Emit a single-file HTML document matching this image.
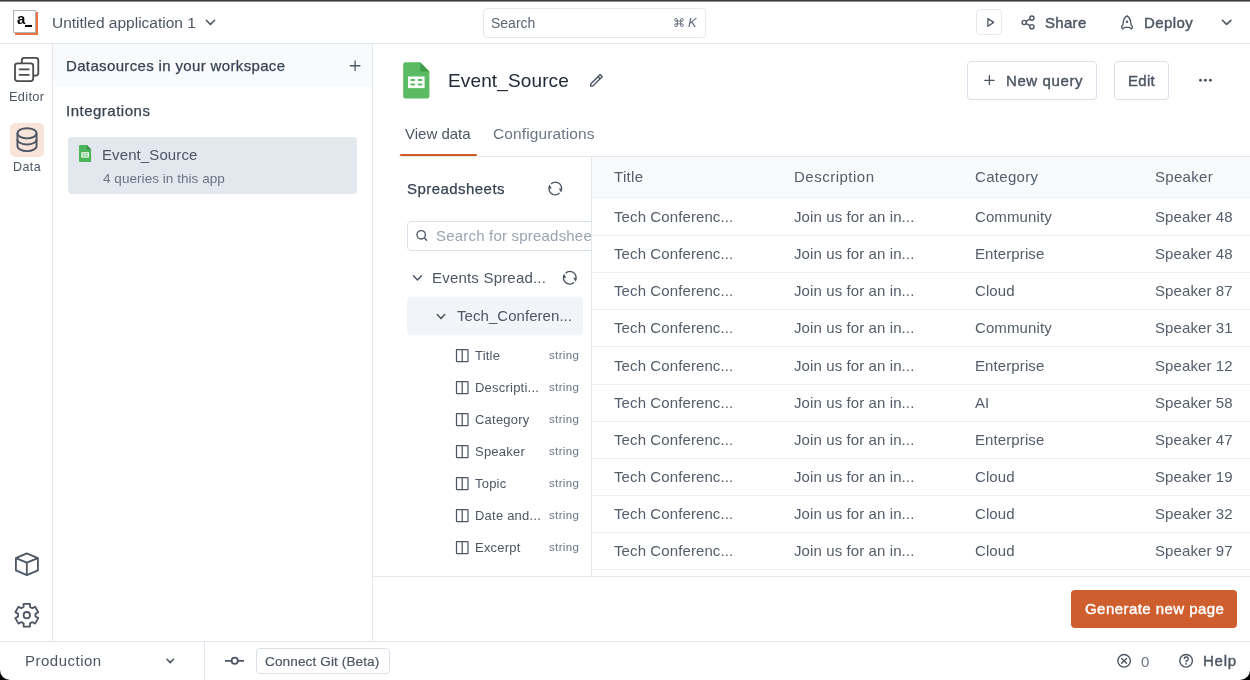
<!DOCTYPE html>
<html><head><meta charset="utf-8">
<style>
*{box-sizing:border-box;margin:0;padding:0}
html,body{width:1250px;height:680px;overflow:hidden;background:#000}
body{font-family:"Liberation Sans",sans-serif;color:#4c5664;position:relative}
#win{position:absolute;left:0;top:0;width:1250px;height:680px;background:#fff;border-radius:0 0 10px 10px;overflow:hidden}
.a{position:absolute;white-space:nowrap;line-height:normal;will-change:transform}
.med{-webkit-text-stroke:0.45px currentColor}
svg{position:absolute;overflow:visible}
</style></head><body>
<div id="win">
<div class="a" style="left:0px;top:0px;width:1250px;height:1px;background:#3c3c3c;"></div>
<div class="a" style="left:0px;top:1px;width:1250px;height:1px;background:#8c8c8c;"></div>
<div class="a" style="left:0px;top:43px;width:1250px;height:1px;background:#e3e8ef;"></div>
<div class="a" style="left:15px;top:12px;width:22.6px;height:22.6px;background:#e7723f;"></div>
<div class="a" style="left:13px;top:10px;width:23px;height:23px;background:#fff;border:1px solid #b4b4b4"></div>
<div class="a" style="left:16.6px;top:10.03px;font-size:15px;color:#000;font-weight:700;">a</div>
<div class="a" style="left:25px;top:25.1px;width:7.4px;height:1.9px;background:#000;"></div>
<div class="a" style="left:52px;top:14.17px;font-size:15.5px;color:#4c5664;">Untitled application 1</div>
<div class="a" style="left:483px;top:8px;width:223px;height:30px;border:1px solid #e3e8ef;border-radius:4px;"></div>
<div class="a" style="left:491px;top:15.33px;font-size:14px;color:#5b6574;">Search</div>
<div class="a" style="left:688px;top:15.43px;font-size:13px;color:#5b6574;font-style:italic">K</div>
<div class="a" style="left:976px;top:9px;width:26px;height:26px;border:1px solid #e3e8ef;border-radius:4px;"></div>
<div class="a" style="left:1045px;top:14.03px;font-size:15px;color:#4c5664;letter-spacing:0.3px;-webkit-text-stroke:0.42px #4c5664;">Share</div>
<div class="a" style="left:1144px;top:14.03px;font-size:15px;color:#4c5664;letter-spacing:0.4px;-webkit-text-stroke:0.42px #4c5664;">Deploy</div>
<div class="a" style="left:52px;top:44px;width:1px;height:597px;background:#e3e8ef;"></div>
<div class="a" style="left:9px;top:89.42px;font-size:12.8px;color:#4c5664;letter-spacing:0.3px;">Editor</div>
<div class="a" style="left:10px;top:123px;width:34px;height:34px;background:#f9e4da;border-radius:5px"></div>
<div class="a" style="left:13px;top:159.59px;font-size:12.5px;color:#4c5664;letter-spacing:0.4px;">Data</div>
<div class="a" style="left:53px;top:44px;width:319px;height:43px;background:#f8fafc;"></div>
<div class="a" style="left:372px;top:44px;width:1px;height:597px;background:#e3e8ef;"></div>
<div class="a" style="left:66px;top:56.72px;font-size:15px;color:#364252;letter-spacing:0.35px;-webkit-text-stroke:0.25px #364252;">Datasources in your workspace</div>
<div class="a" style="left:66px;top:101.72px;font-size:15px;color:#364252;letter-spacing:0.5px;-webkit-text-stroke:0.25px #364252;">Integrations</div>
<div class="a" style="left:68px;top:137px;width:289px;height:57px;background:#e3e7ee;border-radius:4px"></div>
<div class="a" style="left:102px;top:145.93px;font-size:15px;color:#4c5664;letter-spacing:0.1px;">Event_Source</div>
<div class="a" style="left:102.5px;top:171.08px;font-size:13.5px;color:#6a7585;letter-spacing:0.05px;">4 queries in this app</div>
<div class="a" style="left:448px;top:70.41px;font-size:19px;color:#202939;letter-spacing:0.13px;">Event_Source</div>
<div class="a" style="left:967px;top:61px;width:130px;height:39px;border:1px solid #d9dfe7;border-radius:4px;"></div>
<div class="a" style="left:1006px;top:71.62px;font-size:15px;color:#4c5664;letter-spacing:0.6px;-webkit-text-stroke:0.42px #4c5664;">New query</div>
<div class="a" style="left:1114px;top:61px;width:55px;height:39px;border:1px solid #d9dfe7;border-radius:4px;"></div>
<div class="a" style="left:1128px;top:71.92px;font-size:15px;color:#4c5664;letter-spacing:0.3px;-webkit-text-stroke:0.42px #4c5664;">Edit</div>
<div class="a" style="left:405px;top:125.23px;font-size:15px;color:#4c5664;">View data</div>
<div class="a" style="left:493px;top:125.27px;font-size:15.5px;color:#6a7585;letter-spacing:0.12px;">Configurations</div>
<div class="a" style="left:398px;top:156px;width:852px;height:1px;background:#e3e8ef;"></div>
<div class="a" style="left:400px;top:154px;width:77px;height:2px;background:#d05b29;border-radius:1px"></div>
<div class="a" style="left:407px;top:180.43px;font-size:15px;color:#364252;letter-spacing:0.45px;-webkit-text-stroke:0.25px #364252;">Spreadsheets</div>
<div class="a" style="left:407px;top:221px;width:200px;height:30px;border:1px solid #d9dfe7;border-radius:4px;"></div>
<div class="a" style="left:436px;top:227.12px;font-size:15px;color:#99a4b3;letter-spacing:0.2px;">Search for spreadsheets</div>
<div class="a" style="left:432px;top:269.43px;font-size:15px;color:#4c5664;letter-spacing:0.2px;">Events Spread...</div>
<div class="a" style="left:407px;top:297px;width:176px;height:38px;background:#f1f5f9;border-radius:4px"></div>
<div class="a" style="left:456.5px;top:307.03px;font-size:15px;color:#4c5664;letter-spacing:0.05px;">Tech_Conferen...</div>
<div class="a" style="left:474.6px;top:347.84px;font-size:13px;color:#4c5664;letter-spacing:0.22px;">Title</div>
<div class="a" style="left:548.6px;top:348.79px;font-size:11.5px;color:#6a7585;letter-spacing:0.35px;">string</div>
<div class="a" style="left:474.6px;top:379.84px;font-size:13px;color:#4c5664;letter-spacing:0.22px;">Descripti...</div>
<div class="a" style="left:548.6px;top:380.79px;font-size:11.5px;color:#6a7585;letter-spacing:0.35px;">string</div>
<div class="a" style="left:474.6px;top:411.84px;font-size:13px;color:#4c5664;letter-spacing:0.22px;">Category</div>
<div class="a" style="left:548.6px;top:412.79px;font-size:11.5px;color:#6a7585;letter-spacing:0.35px;">string</div>
<div class="a" style="left:474.6px;top:443.84px;font-size:13px;color:#4c5664;letter-spacing:0.22px;">Speaker</div>
<div class="a" style="left:548.6px;top:444.79px;font-size:11.5px;color:#6a7585;letter-spacing:0.35px;">string</div>
<div class="a" style="left:474.6px;top:475.84px;font-size:13px;color:#4c5664;letter-spacing:0.22px;">Topic</div>
<div class="a" style="left:548.6px;top:476.79px;font-size:11.5px;color:#6a7585;letter-spacing:0.35px;">string</div>
<div class="a" style="left:474.6px;top:507.84px;font-size:13px;color:#4c5664;letter-spacing:0.22px;">Date and...</div>
<div class="a" style="left:548.6px;top:508.79px;font-size:11.5px;color:#6a7585;letter-spacing:0.35px;">string</div>
<div class="a" style="left:474.6px;top:539.84px;font-size:13px;color:#4c5664;letter-spacing:0.22px;">Excerpt</div>
<div class="a" style="left:548.6px;top:540.79px;font-size:11.5px;color:#6a7585;letter-spacing:0.35px;">string</div>
<div class="a" style="left:592px;top:157px;width:658px;height:419px;background:#fff;"></div>
<div class="a" style="left:592px;top:157px;width:658px;height:40px;background:#f8fafc;"></div>
<div class="a" style="left:591px;top:157px;width:1px;height:419px;background:#e3e8ef;"></div>
<div class="a" style="left:614px;top:168.03px;font-size:15px;color:#535d6b;letter-spacing:0.3px;">Title</div>
<div class="a" style="left:794px;top:168.03px;font-size:15px;color:#535d6b;letter-spacing:0.5px;">Description</div>
<div class="a" style="left:975px;top:168.03px;font-size:15px;color:#535d6b;letter-spacing:0.3px;">Category</div>
<div class="a" style="left:1155px;top:168.03px;font-size:15px;color:#535d6b;letter-spacing:0.3px;">Speaker</div>
<div class="a" style="left:592px;top:197px;width:658px;height:1px;background:#edf1f5;"></div>
<div class="a" style="left:614px;top:207.83px;font-size:15px;color:#535d6b;letter-spacing:0.1px;">Tech Conferenc...</div>
<div class="a" style="left:794px;top:207.83px;font-size:15px;color:#535d6b;letter-spacing:0.1px;">Join us for an in...</div>
<div class="a" style="left:975px;top:207.83px;font-size:15px;color:#535d6b;letter-spacing:0.1px;">Community</div>
<div class="a" style="left:1155px;top:207.83px;font-size:15px;color:#535d6b;letter-spacing:0.1px;">Speaker 48</div>
<div class="a" style="left:592px;top:235px;width:658px;height:1px;background:#eef1f4;"></div>
<div class="a" style="left:614px;top:245.03px;font-size:15px;color:#535d6b;letter-spacing:0.1px;">Tech Conferenc...</div>
<div class="a" style="left:794px;top:245.03px;font-size:15px;color:#535d6b;letter-spacing:0.1px;">Join us for an in...</div>
<div class="a" style="left:975px;top:245.03px;font-size:15px;color:#535d6b;letter-spacing:0.1px;">Enterprise</div>
<div class="a" style="left:1155px;top:245.03px;font-size:15px;color:#535d6b;letter-spacing:0.1px;">Speaker 48</div>
<div class="a" style="left:592px;top:272px;width:658px;height:1px;background:#eef1f4;"></div>
<div class="a" style="left:614px;top:282.23px;font-size:15px;color:#535d6b;letter-spacing:0.1px;">Tech Conferenc...</div>
<div class="a" style="left:794px;top:282.23px;font-size:15px;color:#535d6b;letter-spacing:0.1px;">Join us for an in...</div>
<div class="a" style="left:975px;top:282.23px;font-size:15px;color:#535d6b;letter-spacing:0.1px;">Cloud</div>
<div class="a" style="left:1155px;top:282.23px;font-size:15px;color:#535d6b;letter-spacing:0.1px;">Speaker 87</div>
<div class="a" style="left:592px;top:309px;width:658px;height:1px;background:#eef1f4;"></div>
<div class="a" style="left:614px;top:319.32px;font-size:15px;color:#535d6b;letter-spacing:0.1px;">Tech Conferenc...</div>
<div class="a" style="left:794px;top:319.32px;font-size:15px;color:#535d6b;letter-spacing:0.1px;">Join us for an in...</div>
<div class="a" style="left:975px;top:319.32px;font-size:15px;color:#535d6b;letter-spacing:0.1px;">Community</div>
<div class="a" style="left:1155px;top:319.32px;font-size:15px;color:#535d6b;letter-spacing:0.1px;">Speaker 31</div>
<div class="a" style="left:592px;top:346px;width:658px;height:1px;background:#eef1f4;"></div>
<div class="a" style="left:614px;top:356.53px;font-size:15px;color:#535d6b;letter-spacing:0.1px;">Tech Conferenc...</div>
<div class="a" style="left:794px;top:356.53px;font-size:15px;color:#535d6b;letter-spacing:0.1px;">Join us for an in...</div>
<div class="a" style="left:975px;top:356.53px;font-size:15px;color:#535d6b;letter-spacing:0.1px;">Enterprise</div>
<div class="a" style="left:1155px;top:356.53px;font-size:15px;color:#535d6b;letter-spacing:0.1px;">Speaker 12</div>
<div class="a" style="left:592px;top:384px;width:658px;height:1px;background:#eef1f4;"></div>
<div class="a" style="left:614px;top:393.73px;font-size:15px;color:#535d6b;letter-spacing:0.1px;">Tech Conferenc...</div>
<div class="a" style="left:794px;top:393.73px;font-size:15px;color:#535d6b;letter-spacing:0.1px;">Join us for an in...</div>
<div class="a" style="left:975px;top:393.73px;font-size:15px;color:#535d6b;letter-spacing:0.1px;">AI</div>
<div class="a" style="left:1155px;top:393.73px;font-size:15px;color:#535d6b;letter-spacing:0.1px;">Speaker 58</div>
<div class="a" style="left:592px;top:421px;width:658px;height:1px;background:#eef1f4;"></div>
<div class="a" style="left:614px;top:430.93px;font-size:15px;color:#535d6b;letter-spacing:0.1px;">Tech Conferenc...</div>
<div class="a" style="left:794px;top:430.93px;font-size:15px;color:#535d6b;letter-spacing:0.1px;">Join us for an in...</div>
<div class="a" style="left:975px;top:430.93px;font-size:15px;color:#535d6b;letter-spacing:0.1px;">Enterprise</div>
<div class="a" style="left:1155px;top:430.93px;font-size:15px;color:#535d6b;letter-spacing:0.1px;">Speaker 47</div>
<div class="a" style="left:592px;top:458px;width:658px;height:1px;background:#eef1f4;"></div>
<div class="a" style="left:614px;top:468.12px;font-size:15px;color:#535d6b;letter-spacing:0.1px;">Tech Conferenc...</div>
<div class="a" style="left:794px;top:468.12px;font-size:15px;color:#535d6b;letter-spacing:0.1px;">Join us for an in...</div>
<div class="a" style="left:975px;top:468.12px;font-size:15px;color:#535d6b;letter-spacing:0.1px;">Cloud</div>
<div class="a" style="left:1155px;top:468.12px;font-size:15px;color:#535d6b;letter-spacing:0.1px;">Speaker 19</div>
<div class="a" style="left:592px;top:495px;width:658px;height:1px;background:#eef1f4;"></div>
<div class="a" style="left:614px;top:505.22px;font-size:15px;color:#535d6b;letter-spacing:0.1px;">Tech Conferenc...</div>
<div class="a" style="left:794px;top:505.22px;font-size:15px;color:#535d6b;letter-spacing:0.1px;">Join us for an in...</div>
<div class="a" style="left:975px;top:505.22px;font-size:15px;color:#535d6b;letter-spacing:0.1px;">Cloud</div>
<div class="a" style="left:1155px;top:505.22px;font-size:15px;color:#535d6b;letter-spacing:0.1px;">Speaker 32</div>
<div class="a" style="left:592px;top:532px;width:658px;height:1px;background:#eef1f4;"></div>
<div class="a" style="left:614px;top:542.42px;font-size:15px;color:#535d6b;letter-spacing:0.1px;">Tech Conferenc...</div>
<div class="a" style="left:794px;top:542.42px;font-size:15px;color:#535d6b;letter-spacing:0.1px;">Join us for an in...</div>
<div class="a" style="left:975px;top:542.42px;font-size:15px;color:#535d6b;letter-spacing:0.1px;">Cloud</div>
<div class="a" style="left:1155px;top:542.42px;font-size:15px;color:#535d6b;letter-spacing:0.1px;">Speaker 97</div>
<div class="a" style="left:592px;top:569px;width:658px;height:1px;background:#eef1f4;"></div>
<div class="a" style="left:373px;top:576px;width:877px;height:1px;background:#e3e8ef;"></div>
<div class="a" style="left:1071px;top:590px;width:166px;height:38px;background:#cf5e2e;border-radius:4px"></div>
<div class="a" style="left:1085px;top:600.12px;font-size:15px;color:#fff;letter-spacing:0.45px;-webkit-text-stroke:0.42px #fff;">Generate new page</div>
<div class="a" style="left:0px;top:641px;width:1250px;height:1px;background:#e3e8ef;"></div>
<div class="a" style="left:204px;top:642px;width:1px;height:38px;background:#e3e8ef;"></div>
<div class="a" style="left:25px;top:652.12px;font-size:15px;color:#4c5664;letter-spacing:0.5px;">Production</div>
<div class="a" style="left:256px;top:648px;width:134px;height:26px;border:1px solid #d9dfe7;border-radius:4px;"></div>
<div class="a" style="left:265px;top:653.59px;font-size:13.6px;color:#4c5664;letter-spacing:0.1px;-webkit-text-stroke:0.2px #4c5664;">Connect Git (Beta)</div>
<div class="a" style="left:1141px;top:653.02px;font-size:15px;color:#6a7585;">0</div>
<div class="a" style="left:1203px;top:652.42px;font-size:15px;color:#4c5664;letter-spacing:0.75px;-webkit-text-stroke:0.42px #4c5664;">Help</div>
<svg style="left:0;top:0" width="1250" height="680" viewBox="0 0 1250 680"><path d="M206.3 20.3 L210.5 24.5 L214.6 20.3" fill="none" stroke="#4c5664" stroke-width="1.6" stroke-linecap="round" stroke-linejoin="round"/><g fill="none" stroke="#6a7585" stroke-width="0.95"><circle cx="676" cy="19.8" r="1.4"/><circle cx="681.9" cy="19.8" r="1.4"/><circle cx="676" cy="25.2" r="1.4"/><circle cx="681.9" cy="25.2" r="1.4"/><path d="M676 21.2 H681.9 M676 23.8 H681.9 M677.4 19.8 V25.2 M680.5 19.8 V25.2"/></g><path d="M987.9 18.6 L993.7 22.4 L987.9 26.2 Z" fill="none" stroke="#4c5664" stroke-width="1.3" stroke-linejoin="round"/><g fill="none" stroke="#4c5664" stroke-width="1.4"><circle cx="1024.2" cy="22.5" r="2.1"/><circle cx="1031.9" cy="18.1" r="2.1"/><circle cx="1031.9" cy="26.7" r="2.1"/><path d="M1026.1 21.4 L1030 19.2 M1026.1 23.6 L1030 25.7"/></g><g fill="none" stroke="#4c5664" stroke-width="1.35" stroke-linejoin="round"><path d="M1127 15.9 C1124.3 17.6 1123 20.5 1123 24.5 L1121.5 26.8 L1122.5 29 L1125 27.3 L1129 27.3 L1131.5 29 L1132.5 26.8 L1131 24.5 C1131 20.5 1129.7 17.6 1127 15.9 Z"/></g><circle cx="1127" cy="21.8" r="1.25" fill="#4c5664"/><path d="M1222.4 20.3 L1226.6 24.4 L1230.9 20.3" fill="none" stroke="#4c5664" stroke-width="1.6" stroke-linecap="round" stroke-linejoin="round"/><g fill="none" stroke="#4a4a4a" stroke-width="1.8" stroke-linejoin="round"><path d="M21.8 63.3 V60.4 Q21.8 57.9 24.3 57.9 H35.8 Q38.3 57.9 38.3 60.4 V73.1 Q38.3 75.6 35.8 75.6 H33.2"/><rect x="15" y="63.3" width="18.2" height="17.8" rx="2.5"/><path d="M18.9 69.4 H29.5 M18.9 74.9 H29.5"/></g><g fill="none" stroke="#4c5664" stroke-width="1.9"><ellipse cx="27" cy="133.3" rx="9.55" ry="5.1"/><path d="M17.45 133.3 V146 A9.55 5.1 0 0 0 36.55 146 V133.3"/><path d="M17.45 139.4 A9.55 5.1 0 0 0 36.55 139.4"/></g><g fill="none" stroke="#4c5664" stroke-width="1.8" stroke-linejoin="round"><path d="M26.8 553.4 L37.9 558.1 L37.9 570.4 L26.8 575.1 L15.9 570.4 L15.9 558.1 Z"/><path d="M15.9 558.1 L26.8 562.6 L37.9 558.1 M26.8 562.6 L26.8 575.1"/></g><g fill="none" stroke="#4c5664" stroke-width="1.8" stroke-linejoin="round"><path d="M23.60 607.00 L23.60 603.80 L30.00 603.80 L30.00 607.00 L32.30 608.33 L35.07 606.73 L38.27 612.27 L35.50 613.87 L35.50 616.53 L38.27 618.13 L35.07 623.67 L32.30 622.07 L30.00 623.40 L30.00 626.60 L23.60 626.60 L23.60 623.40 L21.30 622.07 L18.53 623.67 L15.33 618.13 L18.10 616.53 L18.10 613.87 L15.33 612.27 L18.53 606.73 L21.30 608.33 Z"/><circle cx="26.8" cy="615.2" r="3.2"/></g><path d="M355.1 61 V70.5 M350.3 65.75 H359.9" stroke="#4c5664" stroke-width="1.3" stroke-linecap="round"/><path d="M80.2 145 H86.9 L91.1 149.4 V160.9 Q91.1 162.1 89.9 162.1 H80.2 Q79 162.1 79 160.9 V146.2 Q79 145 80.2 145 Z" fill="#4cb55a"/><path d="M86.9 145 L91.1 149.4 H86.9 Z" fill="#3a9146"/><rect x="81.3" y="152.2" width="7.6" height="5.4" fill="#f2faf3"/><path d="M82.5 153.9 H87.7 M82.5 155.9 H87.7" stroke="#4cb55a" stroke-width="1"/><path d="M85.1 153 V157" stroke="#f2faf3" stroke-width="0.8"/><path d="M405.5 62.2 H420.3 L429.4 71.6 V96.2 Q429.4 98.5 427.1 98.5 H405.5 Q403.2 98.5 403.2 96.2 V64.5 Q403.2 62.2 405.5 62.2 Z" fill="#5abb62"/><path d="M420.3 62.5 L429.2 71.6 H420.3 Z" fill="#409a49"/><rect x="408" y="76.5" width="16.6" height="11.6" fill="#fff"/><g stroke="#5abb62" stroke-width="2" stroke-linecap="round"><path d="M411.3 80 H414.2 M418.6 80 H421.6 M411.3 84.6 H414.2 M418.6 84.6 H421.6"/></g><g transform="translate(587.8 71.7) scale(0.72)"><path fill="#4c5664" d="M15.728 9.686l-1.414-1.414L5 17.586V19h1.414l9.314-9.314zm1.414-1.414l1.414-1.414-1.414-1.414-1.414 1.414 1.414 1.414zM7.242 21H3v-4.243L16.435 3.322a1 1 0 0 1 1.414 0l2.829 2.829a1 1 0 0 1 0 1.414L7.243 21z"/></g><path d="M989.4 75.6 V84.6 M984.7 80.3 H994.1" stroke="#4c5664" stroke-width="1.35" stroke-linecap="round"/><g fill="#4c5664"><circle cx="1200.5" cy="80.3" r="1.45"/><circle cx="1205.4" cy="80.3" r="1.45"/><circle cx="1210.4" cy="80.3" r="1.45"/></g><g transform="translate(546.9 180.1) scale(0.7)"><path fill="#4c5664" d="M5.463 4.433A9.961 9.961 0 0 1 12 2c5.523 0 10 4.477 10 10 0 2.136-.67 4.116-1.81 5.74L17 12h3A8 8 0 0 0 6.46 6.228l-.997-1.795zm13.074 15.134A9.961 9.961 0 0 1 12 22C6.477 22 2 17.523 2 12c0-2.136.67-4.116 1.81-5.74L7 12H4a8 8 0 0 0 13.54 5.772l.997 1.795z"/></g><g fill="none" stroke="#4c5664" stroke-width="1.35" stroke-linecap="round"><circle cx="421.2" cy="234.8" r="4.2"/><path d="M424.3 237.9 L426.6 240.2"/></g><path d="M413.5 275.8 L417.5 279.9 L421.5 275.8" fill="none" stroke="#4c5664" stroke-width="1.5" stroke-linecap="round" stroke-linejoin="round"/><g transform="translate(561.4 269.3) scale(0.7)"><path fill="#4c5664" d="M5.463 4.433A9.961 9.961 0 0 1 12 2c5.523 0 10 4.477 10 10 0 2.136-.67 4.116-1.81 5.74L17 12h3A8 8 0 0 0 6.46 6.228l-.997-1.795zm13.074 15.134A9.961 9.961 0 0 1 12 22C6.477 22 2 17.523 2 12c0-2.136.67-4.116 1.81-5.74L7 12H4a8 8 0 0 0 13.54 5.772l.997 1.795z"/></g><path d="M437.3 314.6 L441 318.6 L444.7 314.6" fill="none" stroke="#4c5664" stroke-width="1.5" stroke-linecap="round" stroke-linejoin="round"/><g fill="none" stroke="#4c5664" stroke-width="1.25"><rect x="456.5" y="349.6" width="11.5" height="12" rx="0.6"/><path d="M462.2 349.6 V361.6"/></g><g fill="none" stroke="#4c5664" stroke-width="1.25"><rect x="456.5" y="381.6" width="11.5" height="12" rx="0.6"/><path d="M462.2 381.6 V393.6"/></g><g fill="none" stroke="#4c5664" stroke-width="1.25"><rect x="456.5" y="413.6" width="11.5" height="12" rx="0.6"/><path d="M462.2 413.6 V425.6"/></g><g fill="none" stroke="#4c5664" stroke-width="1.25"><rect x="456.5" y="445.6" width="11.5" height="12" rx="0.6"/><path d="M462.2 445.6 V457.6"/></g><g fill="none" stroke="#4c5664" stroke-width="1.25"><rect x="456.5" y="477.6" width="11.5" height="12" rx="0.6"/><path d="M462.2 477.6 V489.6"/></g><g fill="none" stroke="#4c5664" stroke-width="1.25"><rect x="456.5" y="509.6" width="11.5" height="12" rx="0.6"/><path d="M462.2 509.6 V521.6"/></g><g fill="none" stroke="#4c5664" stroke-width="1.25"><rect x="456.5" y="541.6" width="11.5" height="12" rx="0.6"/><path d="M462.2 541.6 V553.6"/></g><path d="M167 659.3 L170.25 662.6 L173.5 659.3" fill="none" stroke="#4c5664" stroke-width="1.5" stroke-linecap="round" stroke-linejoin="round"/><g fill="none" stroke="#4c5664" stroke-width="1.8"><circle cx="234.75" cy="660.8" r="3.1"/><path d="M225 660.8 H231.6 M237.9 660.8 H244"/></g><g fill="none" stroke="#4c5664" stroke-width="1.4" stroke-linecap="round"><circle cx="1124.1" cy="660.85" r="6.3"/><path d="M1121.6 658.4 L1126.6 663.3 M1126.6 658.4 L1121.6 663.3"/></g><g fill="none" stroke="#4c5664" stroke-width="1.4" stroke-linecap="round"><circle cx="1186.1" cy="660.8" r="6.3"/><path d="M1184.2 658.6 A2 2 0 1 1 1186.1 661 V661.8"/></g><circle cx="1186.1" cy="663.9" r="0.85" fill="#4c5664"/></svg>
</div>
</body></html>
